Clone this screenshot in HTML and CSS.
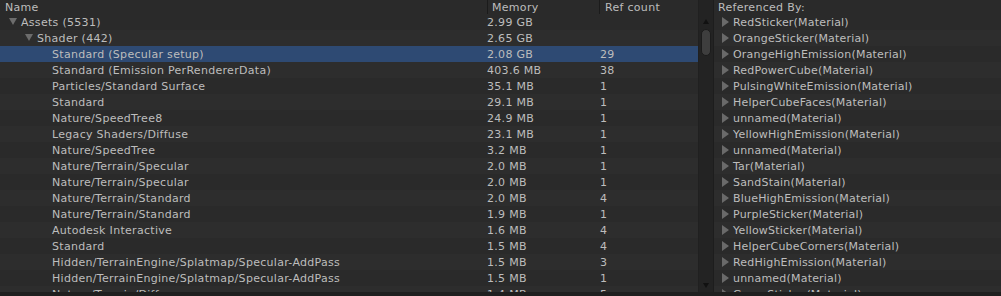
FILE: index.html
```html
<!DOCTYPE html>
<html lang="en">
<head>
    <meta charset="UTF-8">
    <title>Memory Profiler - Assets</title>
    <link rel="stylesheet" href="styles.css">
</head>
<body>
    <div class="window">
        <div class="tree-pane">
            <div class="tree">
                <div class="header">
                    <div class="col name">Name</div>
                    <div class="col mem">Memory</div>
                    <div class="col refs">Ref count</div>
                </div>
                <div class="row">
                    <div class="col name lvl1"><span class="arrow down"></span>Assets (5531)</div>
                    <div class="col mem">2.99 GB</div>
                    <div class="col refs"></div>
                </div>
                <div class="row">
                    <div class="col name lvl2"><span class="arrow down"></span>Shader (442)</div>
                    <div class="col mem">2.65 GB</div>
                    <div class="col refs"></div>
                </div>
                <div class="row selected">
                    <div class="col name lvl3">Standard (Specular setup)</div>
                    <div class="col mem">2.08 GB</div>
                    <div class="col refs">29</div>
                </div>
                <div class="row">
                    <div class="col name lvl3">Standard (Emission PerRendererData)</div>
                    <div class="col mem">403.6 MB</div>
                    <div class="col refs">38</div>
                </div>
                <div class="row">
                    <div class="col name lvl3">Particles/Standard Surface</div>
                    <div class="col mem">35.1 MB</div>
                    <div class="col refs">1</div>
                </div>
                <div class="row">
                    <div class="col name lvl3">Standard</div>
                    <div class="col mem">29.1 MB</div>
                    <div class="col refs">1</div>
                </div>
                <div class="row">
                    <div class="col name lvl3">Nature/SpeedTree8</div>
                    <div class="col mem">24.9 MB</div>
                    <div class="col refs">1</div>
                </div>
                <div class="row">
                    <div class="col name lvl3">Legacy Shaders/Diffuse</div>
                    <div class="col mem">23.1 MB</div>
                    <div class="col refs">1</div>
                </div>
                <div class="row">
                    <div class="col name lvl3">Nature/SpeedTree</div>
                    <div class="col mem">3.2 MB</div>
                    <div class="col refs">1</div>
                </div>
                <div class="row">
                    <div class="col name lvl3">Nature/Terrain/Specular</div>
                    <div class="col mem">2.0 MB</div>
                    <div class="col refs">1</div>
                </div>
                <div class="row">
                    <div class="col name lvl3">Nature/Terrain/Specular</div>
                    <div class="col mem">2.0 MB</div>
                    <div class="col refs">1</div>
                </div>
                <div class="row">
                    <div class="col name lvl3">Nature/Terrain/Standard</div>
                    <div class="col mem">2.0 MB</div>
                    <div class="col refs">4</div>
                </div>
                <div class="row">
                    <div class="col name lvl3">Nature/Terrain/Standard</div>
                    <div class="col mem">1.9 MB</div>
                    <div class="col refs">1</div>
                </div>
                <div class="row">
                    <div class="col name lvl3">Autodesk Interactive</div>
                    <div class="col mem">1.6 MB</div>
                    <div class="col refs">4</div>
                </div>
                <div class="row">
                    <div class="col name lvl3">Standard</div>
                    <div class="col mem">1.5 MB</div>
                    <div class="col refs">4</div>
                </div>
                <div class="row">
                    <div class="col name lvl3">Hidden/TerrainEngine/Splatmap/Specular-AddPass</div>
                    <div class="col mem">1.5 MB</div>
                    <div class="col refs">3</div>
                </div>
                <div class="row">
                    <div class="col name lvl3">Hidden/TerrainEngine/Splatmap/Specular-AddPass</div>
                    <div class="col mem">1.5 MB</div>
                    <div class="col refs">1</div>
                </div>
                <div class="row">
                    <div class="col name lvl3">Nature/Terrain/Diffuse</div>
                    <div class="col mem">1.4 MB</div>
                    <div class="col refs">5</div>
                </div>
            </div>
            <div class="scrollbar">
                <div class="scroll-btn up"></div>
                <div class="track"><div class="thumb"></div></div>
                <div class="scroll-btn down"></div>
            </div>
        </div>
        <div class="refs-pane">
            <div class="header"><div class="col">Referenced By:</div></div>
            <div class="row"><span class="arrow right"></span>RedSticker(Material)</div>
            <div class="row"><span class="arrow right"></span>OrangeSticker(Material)</div>
            <div class="row"><span class="arrow right"></span>OrangeHighEmission(Material)</div>
            <div class="row"><span class="arrow right"></span>RedPowerCube(Material)</div>
            <div class="row"><span class="arrow right"></span>PulsingWhiteEmission(Material)</div>
            <div class="row"><span class="arrow right"></span>HelperCubeFaces(Material)</div>
            <div class="row"><span class="arrow right"></span>unnamed(Material)</div>
            <div class="row"><span class="arrow right"></span>YellowHighEmission(Material)</div>
            <div class="row"><span class="arrow right"></span>unnamed(Material)</div>
            <div class="row"><span class="arrow right"></span>Tar(Material)</div>
            <div class="row"><span class="arrow right"></span>SandStain(Material)</div>
            <div class="row"><span class="arrow right"></span>BlueHighEmission(Material)</div>
            <div class="row"><span class="arrow right"></span>PurpleSticker(Material)</div>
            <div class="row"><span class="arrow right"></span>YellowSticker(Material)</div>
            <div class="row"><span class="arrow right"></span>HelperCubeCorners(Material)</div>
            <div class="row"><span class="arrow right"></span>RedHighEmission(Material)</div>
            <div class="row"><span class="arrow right"></span>unnamed(Material)</div>
            <div class="row"><span class="arrow right"></span>GreenSticker(Material)</div>
        </div>
    </div>
    <div class="footer"></div>
</body>
</html>
```

FILE: styles.css
```css
body {
    margin: 0;
    background: #1f1f1f;
    font-family: 'DejaVu Sans', Verdana, sans-serif;
    font-size: 11px;
    letter-spacing: 0.3px;
    color: #bdbdbd;
    overflow: hidden;
}
.window {
    display: flex;
    height: 292px;
    overflow: hidden;
    background: #282828;
}
.tree-pane {
    display: flex;
    width: 713px;
    flex: none;
}
.tree {
    width: 698px;
}
.header, .row {
    display: grid;
    grid-template-columns: 487px 112px 99px;
    white-space: nowrap;
    box-sizing: border-box;
}
.header {
    height: 14px;
    line-height: 15px;
    background: #2a2a2a;
}
.header .col {
    padding-left: 5px;
}
.header .mem, .header .refs {
    border-left: 1px solid #1b1b1b;
}
.header .mem { padding-left: 4px; }
.row {
    height: 16px;
    line-height: 17px;
    background: #2a2a2a;
}
.row:nth-child(odd) {
    background: #2d2d2d;
}
.row.selected {
    background: #2e4a73;
}
.col {
    overflow: hidden;
}
.row .mem { padding-left: 0; }
.row .refs { padding-left: 1px; }
.lvl1 { padding-left: 9px; }
.lvl2 { padding-left: 25px; }
.lvl3 { padding-left: 52px; }

.arrow {
    display: inline-block;
    vertical-align: middle;
    margin-top: -3px;
}
.arrow.down {
    width: 0;
    height: 0;
    border-left: 4px solid transparent;
    border-right: 4px solid transparent;
    border-top: 7px solid #6c6c6c;
    margin-right: 4px;
}
.arrow.right {
    width: 0;
    height: 0;
    border-top: 5px solid transparent;
    border-bottom: 5px solid transparent;
    border-left: 7px solid #6a6a6a;
    margin-right: 4px;
}

.scrollbar {
    width: 15px;
    display: flex;
    flex-direction: column;
    background: #232323;
    border-left: 1px solid #202020;
}
.scroll-btn {
    height: 14px;
    display: flex;
    align-items: center;
    justify-content: center;
}
.scroll-btn.up { margin-top: 14px; }
.scroll-btn.up::after {
    content: '';
    border-left: 3px solid transparent;
    border-right: 3px solid transparent;
    border-bottom: 5px solid #111;
}
.scroll-btn.down::after {
    content: '';
    border-left: 3px solid transparent;
    border-right: 3px solid transparent;
    border-top: 5px solid #111;
}
.track {
    flex: 1;
    padding: 1px 1px;
}
.thumb {
    height: 25px;
    margin: 0 1px;
    background: #3e3e3e;
    border: 1px solid #1c1c1c;
    border-radius: 6px;
}

.refs-pane {
    flex: 1;
    border-left: 1px solid #1d1d1d;
    background: #282828;
}
.refs-pane .header {
    display: block;
    padding-left: 4px;
}
.refs-pane .row {
    display: block;
    padding-left: 8px;
    letter-spacing: 0.2px;
}
.refs-pane .header .col {
    padding-left: 0;
}
.footer {
    height: 4px;
    background: #1f1f1f;
}
```
